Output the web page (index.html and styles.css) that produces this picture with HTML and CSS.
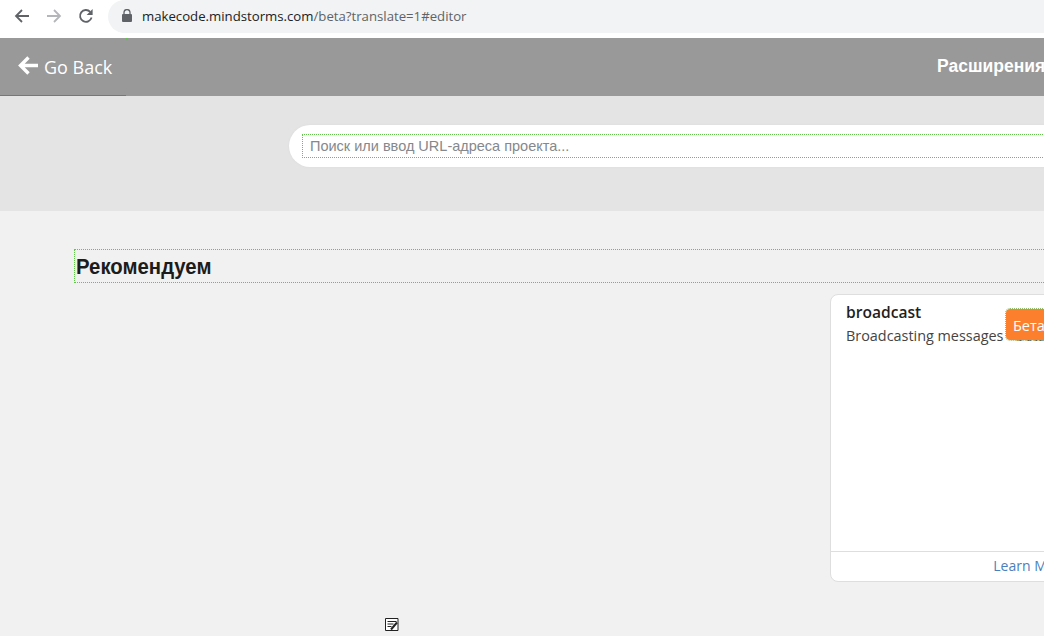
FILE: index.html
```html
<!DOCTYPE html>
<html lang="ru">
<head>
<meta charset="utf-8">
<title>Расширения</title>
<link rel="stylesheet" href="styles.css">
</head>
<body>
<div class="chrome">
  <svg class="nav-icon" viewBox="0 0 16 16"><path d="M15 8H2.500M8 2 2 8l6 6" fill="none" stroke="#5f6368" stroke-width="1.800"/></svg>
  <svg class="nav-icon" viewBox="0 0 16 16"><path d="M1 8h12.500M8 2l6 6-6 6" fill="none" stroke="#b4b6b9" stroke-width="1.800"/></svg>
  <svg class="nav-icon" viewBox="0 0 16 16"><path d="M13.600 9.600A5.900 5.900 0 1 1 12.200 3.800" fill="none" stroke="#5f6368" stroke-width="1.800"/><path d="M14.600 1v6h-6z" fill="#5f6368"/></svg>
  <div class="omnibox">
    <svg class="lock" viewBox="0 0 10 13"><path d="M2 5.500V3.600a3 3 0 0 1 6 0v1.900" fill="none" stroke="#5f6368" stroke-width="1.300"/><rect y="5" width="10" height="8" rx="1" fill="#5f6368"/></svg>
    <span class="url"><span class="host">makecode.mindstorms.com</span>/beta?translate=1#editor</span>
  </div>
</div>
<header class="topbar">
  <div class="back">
    <svg class="back-arrow" viewBox="0 0 21 19"><path d="M21 9.500H4M11.500 1.500l-8 8 8 8" fill="none" stroke="#fff" stroke-width="3.400"/></svg>
    <span>Go Back</span>
  </div>
  <div class="title-zone"><span class="title">Расширения</span></div>
</header>
<section class="search-band">
  <div class="search-pill"><div class="search-field">Поиск или ввод URL-адреса проекта...</div></div>
</section>
<main class="content">
  <h2 class="section-title"><span class="section-text">Рекомендуем</span></h2>
  <article class="card">
    <div class="card-body">
      <div class="card-name">broadcast</div>
      <div class="card-desc">Broadcasting messages - beta</div>
      <div class="badge">Бета</div>
    </div>
    <div class="card-foot">Learn More</div>
  </article>
  <svg class="feedback" viewBox="0 0 14 13"><path d="M.5.500h12.500v12H.5z" fill="#fff" stroke="#222"/><path d="M2.500 3.500h9M2.500 6h6M2.500 8.500h4" stroke="#222"/><path d="M6 11.500 12 4.500" stroke="#222" stroke-width="2"/></svg>
</main>
</body>
</html>
```
FILE: styles.css
```css
* { box-sizing: border-box; }
html, body { margin: 0; height: 636px; overflow: hidden; }
body { width: 1044px; background: #f1f1f1; font-family: "Open Sans", sans-serif; }

.chrome { height: 38px; background: #fff; display: flex; align-items: flex-start; padding-left: 14px; }
.nav-icon { width: 16px; height: 16px; margin: 8px 16px 0 0; flex: none; }
.nav-icon:nth-child(3) { margin-right: 14px; }
.omnibox { flex: none; width: 960px; height: 33px; background: #f1f3f4; border-radius: 17px; display: flex; align-items: center; padding-left: 14px; }
.lock { width: 10px; height: 13px; flex: none; margin-top: -2px; }
.url { margin-left: 10px; font: 13.2px/1 "Open Sans", sans-serif; color: #5f6368; white-space: nowrap; }
.host { color: #202124; }

.topbar { height: 58px; background: #999; display: flex; color: #fff; }
.back { width: 126px; flex: none; display: flex; align-items: center; padding-left: 17px; font-size: 18px; border-bottom: 1px solid #777; }
.back-arrow { width: 21px; height: 19px; margin-right: 6px; margin-top: -2px; flex: none; }
.title-zone { flex: 1; display: flex; align-items: center; padding-left: 810px; white-space: nowrap; border-left: 1px dotted #5fc64a; border-bottom: 1px dotted #5fc64a; }
.title { font: bold 17.5px "Liberation Sans", sans-serif; }

.search-band { height: 115px; background: #e4e4e4; padding: 29px 0 0 289px; }
.search-pill { width: 900px; height: 42px; background: #fff; border-radius: 21px; padding: 9px 0 0 13px; box-shadow: 0 0 2px #d8d8d8; }
.search-field { height: 24px; border: 1px dotted #5fc64a; padding-left: 7px; font: 14.5px/22px "Liberation Sans", sans-serif; color: #85888c; }

.content { position: relative; padding: 38px 0 0 74px; width: 1300px; }
.section-title { margin: 0; width: 1100px; height: 34px; border: 1px dotted #5fc64a; padding-left: 1px; font: bold 22px/33px "Liberation Sans", sans-serif; color: #1c1c1c; }
.section-text { display: inline-block; transform: scaleX(.925); transform-origin: left; }
.card { margin: 11px 0 0 756px; width: 402px; height: 288px; background: #fff; border: 1px solid #dedede; border-radius: 8px; display: flex; flex-direction: column; }
.card-body { flex: 1; position: relative; padding: 5px 15px; }
.card-name { font-size: 15.6px; line-height: 24px; font-weight: 600; color: #1f1f1f; }
.card-desc { font-size: 14.4px; line-height: 24px; color: #444; white-space: nowrap; }
.badge { position: absolute; left: 174px; top: 13px; width: 80px; height: 33px; padding-left: 7px; background: #fb7f2c; background-clip: padding-box; color: #fff; border-radius: 5px; border: 1px dotted #8fc070; font: 14.5px/33px "Open Sans", sans-serif; }
.card-foot { height: 30px; border-top: 1px solid #dedede; text-align: center; font-size: 14px; line-height: 28px; color: #4a7fbd; }
.feedback { position: absolute; left: 385px; top: 407px; width: 14px; height: 13px; }
```
